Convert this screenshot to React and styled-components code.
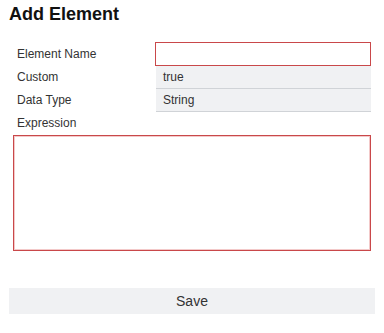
import React from 'react';
import styled, { createGlobalStyle } from 'styled-components';

const GlobalStyle = createGlobalStyle`
  body {
    margin: 0;
    background: #ffffff;
    font-family: "Liberation Sans", Arial, sans-serif;
    color: #222;
  }
`;

const Page = styled.div`
  width: 384px;
  height: 333px;
  padding: 3px 9px 0 9px;
  box-sizing: border-box;
  display: flex;
  flex-direction: column;
`;

const Title = styled.h1`
  margin: 0;
  font-size: 18px;
  font-weight: bold;
  color: #111;
  line-height: 22px;
`;

const Fields = styled.div`
  margin-top: 17px;
  padding-left: 8px;
  display: grid;
  grid-template-columns: 138px 216px;
`;

const Label = styled.div`
  font-size: 12px;
  color: #333;
  height: ${(p) => (p.$tall ? '24px' : '23px')};
  line-height: ${(p) => (p.$tall ? '24px' : '23px')};
`;

const TextInput = styled.input`
  box-sizing: border-box;
  height: 24px;
  width: 216px;
  margin: 0;
  border: 1px solid #c9484a;
  border-radius: 0;
  outline: none;
  padding: 0 6px;
  font-family: inherit;
  font-size: 12px;
`;

const ReadOnly = styled.div`
  box-sizing: border-box;
  height: 23px;
  margin-left: 1px;
  padding-left: 7px;
  background: #f0f1f3;
  border-bottom: 1px solid #d0d3d7;
  font-size: 12px;
  line-height: 22px;
  color: #333;
`;

const ExpressionLabel = styled.div`
  padding-left: 8px;
  font-size: 12px;
  color: #333;
  line-height: 23px;
`;

const Expression = styled.textarea`
  box-sizing: border-box;
  margin: 0 0 0 4px;
  width: 358px;
  height: 116px;
  border: 1px solid #c9484a;
  box-shadow: inset 0 0 0 1px #f3c9c9;
  border-radius: 0;
  outline: none;
  resize: none;
  font-family: inherit;
  font-size: 12px;
`;

const SaveButton = styled.button`
  margin-top: 37px;
  width: 366px;
  height: 26px;
  border: none;
  background: #f0f1f3;
  color: #333;
  font-family: inherit;
  font-size: 14px;
  cursor: pointer;
`;

const App = () => (
  <>
    <GlobalStyle />
    <Page>
      <Title>Add Element</Title>
      <Fields>
        <Label $tall>Element Name</Label>
        <TextInput type="text" />
        <Label>Custom</Label>
        <ReadOnly>true</ReadOnly>
        <Label>Data Type</Label>
        <ReadOnly>String</ReadOnly>
      </Fields>
      <ExpressionLabel>Expression</ExpressionLabel>
      <Expression />
      <SaveButton>Save</SaveButton>
    </Page>
  </>
);

export default App;
